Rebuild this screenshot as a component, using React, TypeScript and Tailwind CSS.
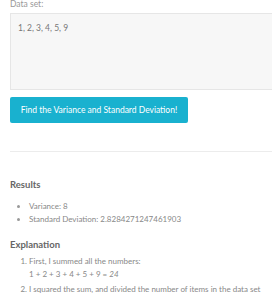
import React, { JSX } from 'react';

const App: React.FC = (): JSX.Element => {
  const values = [1, 2, 3, 4, 5, 9];
  return (
    <div className="w-[272px] h-[300px] overflow-hidden bg-white font-['Lato',sans-serif] text-[#888]">
      <div className="pl-[10px]">
        <label className="block text-[8.5px] leading-[12px] -mt-[2px] text-[#999]">Data set:</label>
        <div className="mt-[3px] h-[77px] w-[280px] border border-[#e6e6e6] bg-[#f7f7f7] px-[7px] py-[8px] text-[8.5px] text-[#777]">
          {values.join(', ')}
        </div>
        <button className="mt-[7px] h-[26px] w-[178px] rounded-[2px] bg-[#19b1cf] text-[8.5px] text-white">
          Find the Variance and Standard Deviation!
        </button>
        <div className="mt-[28px] h-px bg-[#ececec]" />
      </div>

      <div className="pl-[10px] pt-[27px]">
        <h3 className="text-[9.5px] font-bold leading-[12px] text-[#666]">Results</h3>
        <ul className="mt-[9px] list-disc pl-[19px] text-[8px] leading-[13px] marker:text-[#999]">
          <li>Variance: 8</li>
          <li>Standard Deviation: 2.8284271247461903</li>
        </ul>

        <h3 className="mt-[13px] text-[9.5px] font-bold leading-[12px] text-[#666]">Explanation</h3>
        <ol className="mt-[4px] list-decimal pl-[19px] text-[8px] leading-[13px]">
          <li>
            First, I summed all the numbers:
            <div className="mb-[2px] leading-[13px]">
              1 + 2 + 3 + 4 + 5 + 9 = <i>24</i>
            </div>
          </li>
          <li className="whitespace-nowrap">I squared the sum, and divided the number of items in the data set</li>
        </ol>
      </div>
    </div>
  );
};

export default App;
